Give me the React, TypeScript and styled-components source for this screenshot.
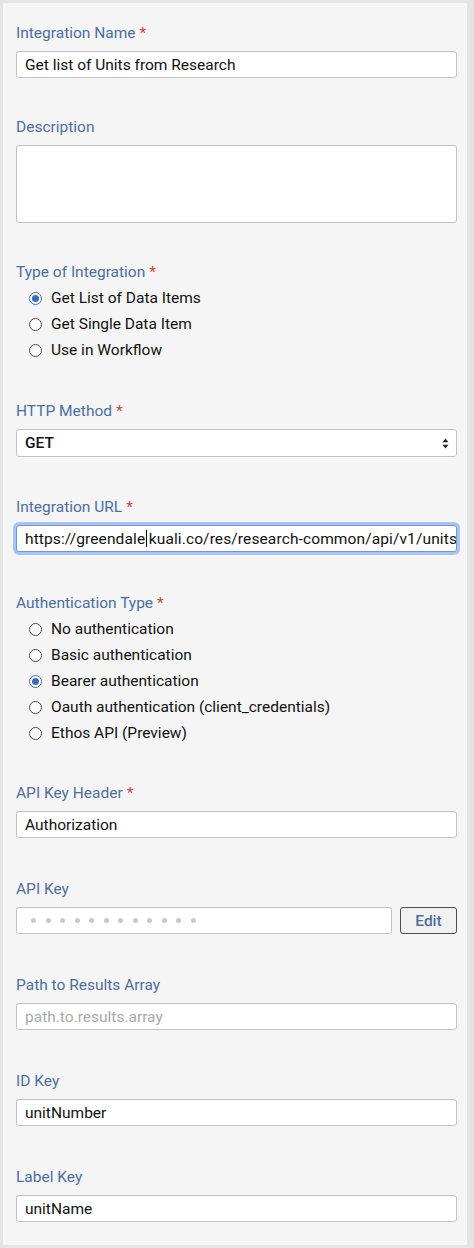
import React from 'react'
import styled, { createGlobalStyle, css } from 'styled-components'

const GlobalStyle = createGlobalStyle`
  html, body {
    margin: 0;
    padding: 0;
    background: #e6e6e6;
  }
  body {
    font-family: Roboto, "Liberation Sans", Arial, sans-serif;
    -webkit-font-smoothing: antialiased;
  }
  * {
    box-sizing: border-box;
  }
`

const Panel = styled.form`
  height: 1248px;
  background: #f5f5f5;
  border-style: solid;
  border-color: #e4e4e4;
  border-width: 3px 7px 3px 3px;
  padding: 20px 10px 0 13px;
  display: flex;
  flex-direction: column;
`

const Field = styled.div<{ $after?: number }>`
  display: flex;
  flex-direction: column;
  margin-bottom: ${({ $after }) => $after ?? 41}px;
`

const Label = styled.label<{ $gap?: number }>`
  display: block;
  font-size: 15.5px;
  line-height: 20px;
  color: #4e6f9e;
  margin-bottom: ${({ $gap }) => $gap ?? 8}px;
`

const Required = styled.span`
  color: #c9463a;
  margin-left: 4px;
`

const boxStyles = css`
  width: 100%;
  height: 27px;
  border: 1px solid #c2c2c2;
  border-radius: 3px;
  background: #fff;
  padding: 0 8px;
  font-family: inherit;
  font-size: 15.5px;
  color: #111;
  outline: none;
`

const TextInput = styled.input`
  ${boxStyles}
  &::placeholder {
    color: #a9a9a9;
  }
`

const TextArea = styled.textarea`
  ${boxStyles}
  height: 78px;
  resize: none;
`

const FocusedBox = styled.div`
  ${boxStyles}
  border-color: #6c97dd;
  box-shadow: 0 0 0 3px #aac4ef;
  display: flex;
  align-items: center;
  white-space: nowrap;
  overflow: hidden;
  letter-spacing: 0.12px;
`

const Caret = styled.span`
  display: inline-block;
  width: 1px;
  height: 17px;
  background: #000;
  margin: 0 1.5px 0 1px;
  flex: none;
`

const SelectBox = styled.div`
  ${boxStyles}
  height: 28px;
  display: flex;
  align-items: center;
  justify-content: space-between;
  font-weight: 500;
  padding-right: 7px;
`

const RadioGroup = styled.div`
  display: flex;
  flex-direction: column;
`

const RadioRow = styled.div`
  display: flex;
  align-items: center;
  height: 26px;
  padding-left: 13px;
  font-size: 15.5px;
  color: #111;
`

const RadioMark = styled.span<{ $checked?: boolean }>`
  width: 13px;
  height: 13px;
  border-radius: 50%;
  margin-right: 9px;
  flex: none;
  display: flex;
  align-items: center;
  justify-content: center;
  border: 1.5px solid ${({ $checked }) => ($checked ? '#3c6bb0' : '#4a4a4a')};
  background: #fff;
  &::after {
    content: '';
    width: 7px;
    height: 7px;
    border-radius: 50%;
    background: ${({ $checked }) => ($checked ? '#3c6bb0' : 'transparent')};
  }
`

const KeyRow = styled.div`
  display: flex;
  gap: 8px;
`

const SecretBox = styled.div`
  ${boxStyles}
  display: flex;
  align-items: center;
  gap: 9.5px;
  padding-left: 14px;
  flex: 1;
`

const Dot = styled.span`
  width: 5px;
  height: 5px;
  border-radius: 50%;
  background: #c9c9c9;
  flex: none;
`

const EditButton = styled.button`
  width: 57px;
  height: 27px;
  border: 1.5px solid #4d4d4d;
  border-radius: 3px;
  background: #f1f1f1;
  color: #4e6f9e;
  font-family: inherit;
  font-size: 15.5px;
  font-weight: 500;
  padding: 0;
  flex: none;
`

const Arrows = () => (
  <svg width="7" height="11" viewBox="0 0 7 11">
    <path d="M3.5 0.5 L6.5 4.2 L0.5 4.2 Z" fill="#222" />
    <path d="M3.5 10.5 L6.5 6.8 L0.5 6.8 Z" fill="#222" />
  </svg>
)

const FieldLabel: React.FC<{ text: string; required?: boolean; gap?: number }> = ({
  text,
  required,
  gap,
}) => (
  <Label $gap={gap}>
    {text}
    {required && <Required>*</Required>}
  </Label>
)

type RadioFieldProps = {
  label: string
  options: string[]
  checked: number
  after: number
}

const RadioField: React.FC<RadioFieldProps> = ({ label, options, checked, after }) => (
  <Field $after={after}>
    <FieldLabel text={label} required gap={3} />
    <RadioGroup>
      {options.map((opt, i) => (
        <RadioRow key={opt}>
          <RadioMark $checked={i === checked} />
          {opt}
        </RadioRow>
      ))}
    </RadioGroup>
  </Field>
)

export default function App() {
  return (
    <>
      <GlobalStyle />
      <Panel onSubmit={(e) => e.preventDefault()}>
        <Field $after={39}>
          <FieldLabel text="Integration Name" required />
          <TextInput readOnly defaultValue="Get list of Units from Research" />
        </Field>

        <Field $after={39}>
          <FieldLabel text="Description" />
          <TextArea readOnly />
        </Field>

        <RadioField
          label="Type of Integration"
          options={['Get List of Data Items', 'Get Single Data Item', 'Use in Workflow']}
          checked={0}
          after={38}
        />

        <Field $after={40}>
          <FieldLabel text="HTTP Method" required />
          <SelectBox>
            GET
            <Arrows />
          </SelectBox>
        </Field>

        <Field>
          <FieldLabel text="Integration URL" required />
          <FocusedBox>
            https://greendale
            <Caret />
            kuali.co/res/research-common/api/v1/units
          </FocusedBox>
        </Field>

        <RadioField
          label="Authentication Type"
          options={[
            'No authentication',
            'Basic authentication',
            'Bearer authentication',
            'Oauth authentication (client_credentials)',
            'Ethos API (Preview)',
          ]}
          checked={2}
          after={37}
        />

        <Field>
          <FieldLabel text="API Key Header" required />
          <TextInput readOnly defaultValue="Authorization" />
        </Field>

        <Field>
          <FieldLabel text="API Key" />
          <KeyRow>
            <SecretBox>
              {Array.from({ length: 12 }).map((_, i) => (
                <Dot key={i} />
              ))}
            </SecretBox>
            <EditButton type="button">Edit</EditButton>
          </KeyRow>
        </Field>

        <Field>
          <FieldLabel text="Path to Results Array" />
          <TextInput readOnly placeholder="path.to.results.array" />
        </Field>

        <Field>
          <FieldLabel text="ID Key" />
          <TextInput readOnly defaultValue="unitNumber" />
        </Field>

        <Field>
          <FieldLabel text="Label Key" />
          <TextInput readOnly defaultValue="unitName" />
        </Field>
      </Panel>
    </>
  )
}
